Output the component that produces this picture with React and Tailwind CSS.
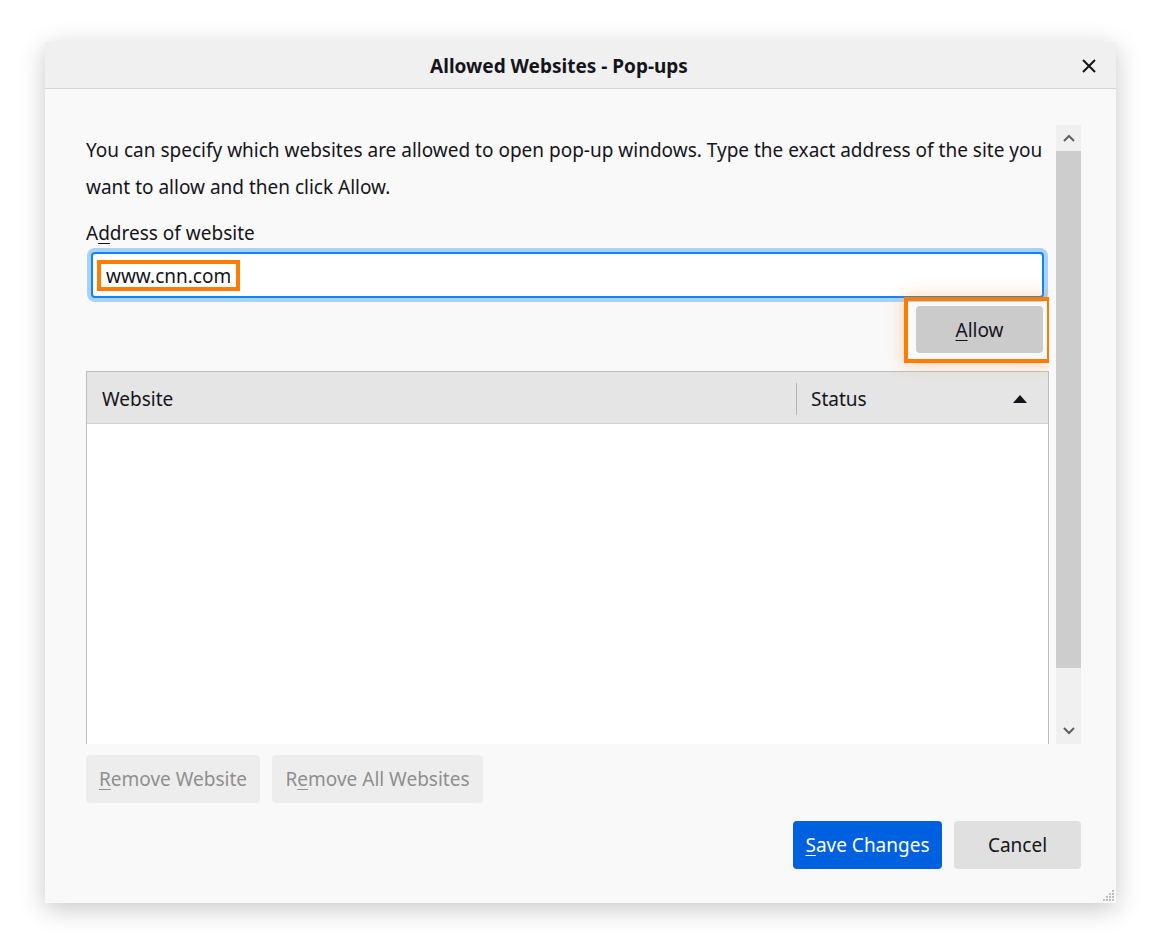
import React from "react";

const font = { fontFamily: '"Noto Sans", "Open Sans", sans-serif' };

const CloseIcon = () => (
  <svg width="16" height="16" viewBox="0 0 16 16" fill="none" stroke="#15141a" strokeWidth="2">
    <path d="M2 2 L14 14 M14 2 L2 14" />
  </svg>
);

const Chevron = ({ up }) => (
  <svg width="12" height="8" viewBox="0 0 12 8" fill="none" stroke="#606060" strokeWidth="2">
    {up ? <path d="M1 7 L6 2 L11 7" /> : <path d="M1 1 L6 6 L11 1" />}
  </svg>
);

const Grip = () => (
  <svg width="12" height="12" viewBox="0 0 12 12" fill="#bdbdbd">
    <rect x="9" y="0" width="2" height="2" />
    <rect x="6" y="3" width="2" height="2" />
    <rect x="9" y="3" width="2" height="2" />
    <rect x="3" y="6" width="2" height="2" />
    <rect x="6" y="6" width="2" height="2" />
    <rect x="9" y="6" width="2" height="2" />
    <rect x="0" y="9" width="2" height="2" />
    <rect x="3" y="9" width="2" height="2" />
    <rect x="6" y="9" width="2" height="2" />
    <rect x="9" y="9" width="2" height="2" />
  </svg>
);

export default function App() {
  return (
    <div className="min-h-[946px] bg-white pt-[42px] pl-[45px] text-[#15141a]" style={font}>
      <div className="relative flex h-[861px] w-[1071px] flex-col bg-[#f9f9f9] shadow-[0_6px_24px_rgba(0,0,0,0.22)]">
        {/* Title bar */}
        <div className="flex h-[47px] items-center border-b border-[#d4d4d4] bg-[#f0f0f0] pt-[2px]">
          <div className="flex-1 text-center text-[19px] font-bold">Allowed Websites - Pop-ups</div>
          <button className="flex w-[43px] items-center justify-start pl-[8px]">
            <CloseIcon />
          </button>
        </div>

        {/* Scroll area */}
        <div className="mt-[36px] flex h-[619px]">
          <div className="ml-[41px] w-[963px] overflow-hidden">
            <p className="mt-[7px] text-[19px] leading-[37px]">
              You can specify which websites are allowed to open pop-up windows. Type the exact address of the site you want to allow and then click Allow.
            </p>
            <div className="mt-[14px] text-[19px] leading-[26px]">
              A<span className="underline underline-offset-[3px]">d</span>dress of website
            </div>
            <div className="ml-[5px] mt-[6px] h-[46px] w-[953px] rounded-[4px] border-2 border-[#0a84ff] bg-white pl-[4px] pt-[6px] shadow-[0_0_0_4px_#a9d2f6]">
              <span className="inline-block h-[31px] border-[4px] border-[#ff7c00] px-[5px] pt-[1px] text-[19px] leading-[22px]">
                www.cnn.com
              </span>
            </div>
            <div className="flex justify-end">
              <div className="relative mr-[6px] mt-[8px]">
                <div className="pointer-events-none absolute -bottom-[10px] -left-[12px] -right-[8px] -top-[9px] border-[4px] border-[#ff7c00] shadow-[0_0_16px_rgba(255,140,40,0.4)]" />
                <button className="h-[47px] w-[127px] rounded-[4px] bg-[#cbcbcb] pt-[2px] text-[19px]">
                  <span className="underline underline-offset-[3px]">A</span>llow
                </button>
              </div>
            </div>
            <div className="mt-[18px] h-[420px] border border-[#bdbdbd] bg-white">
              <div className="flex h-[52px] items-center border-b border-[#d2d2d2] bg-[#e5e5e5] pt-[3px] text-[19px]">
                <div className="w-[709px] pl-[15px]">Website</div>
                <div className="h-[32px] w-px bg-[#b5b5b5]" />
                <div className="flex flex-1 items-center justify-between pl-[14px] pr-[21px]">
                  <span>Status</span>
                  <svg width="14" height="8" viewBox="0 0 14 8" fill="#15141a">
                    <path d="M0 8 L7 0 L14 8 Z" />
                  </svg>
                </div>
              </div>
            </div>
          </div>
          <div className="ml-[7px] flex w-[25px] flex-col bg-[#f0f0f0]">
            <div className="flex h-[26px] items-center justify-center">
              <Chevron up />
            </div>
            <div className="h-[517px] bg-[#cdcdcd]" />
            <div className="flex flex-1 items-end justify-center pb-[9px]">
              <Chevron />
            </div>
          </div>
        </div>

        {/* Remove buttons */}
        <div className="ml-[41px] mt-[11px] flex gap-[12px] text-[19px] text-[#8f8f8f]">
          <button className="h-[48px] w-[174px] rounded-[4px] bg-[#ededed]">
            <span className="underline underline-offset-[3px]">R</span>emove Website
          </button>
          <button className="h-[48px] w-[211px] rounded-[4px] bg-[#ededed]">
            R<span className="underline underline-offset-[3px]">e</span>move All Websites
          </button>
        </div>

        {/* Footer */}
        <div className="mr-[35px] mt-[18px] flex justify-end gap-[12px] text-[19px]">
          <button className="h-[48px] w-[149px] rounded-[4px] bg-[#0061e0] text-white">
            <span className="underline underline-offset-[3px]">S</span>ave Changes
          </button>
          <button className="h-[48px] w-[127px] rounded-[4px] bg-[#e0e0e0]">Cancel</button>
        </div>

        <div className="absolute bottom-[1px] right-[1px]">
          <Grip />
        </div>
      </div>
    </div>
  );
}
